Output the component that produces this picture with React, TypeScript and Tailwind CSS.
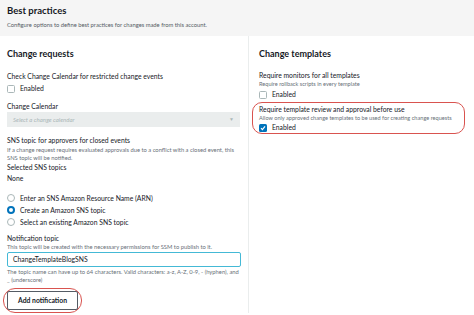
export default function App() {
  return (
    <div className="w-[474px] h-[315px] overflow-hidden bg-white text-[#16191f]" style={{ fontFamily: 'Lato, "Noto Sans", sans-serif' }}>
      <div className="bg-[#f5f5f5] h-[36px] px-[7px] pt-[4px]">
        <div className="text-[9.5px] font-bold leading-[13px]">Best practices</div>
        <div className="mt-[3px] text-[5.8px] text-[#545b64] leading-[9px]">Configure options to define best practices for changes made from this account.</div>
      </div>
      <div className="flex">
        <div className="w-[249px] px-[7px] pt-[11px] border-r border-[#eaeded]">
          <div className="text-[9px] font-bold leading-[13px]">Change requests</div>
          <div className="mt-[11px] text-[6.8px] leading-[10px]">Check Change Calendar for restricted change events</div>
          <Check label="Enabled" />
          <div className="mt-[7px] text-[6.8px] leading-[10px]">Change Calendar</div>
          <div className="mt-[1px] h-[15px] w-[233px] bg-[#eaeded] flex items-center justify-between px-[6px]">
            <span className="text-[6px] italic text-[#aab7b8]">Select a change calendar</span>
            <span className="text-[5px] text-[#aab7b8]">▼</span>
          </div>
          <div className="mt-[8px] text-[6.8px] leading-[10px]">SNS topic for approvers for closed events</div>
          <div className="mt-[1px] text-[5.8px] leading-[7.5px] text-[#687078]">If a change request requires evaluated approvals due to a conflict with a closed event, this SNS topic will be notified.</div>
          <div className="mt-[1px] text-[6.8px] leading-[10px]">Selected SNS topics</div>
          <div className="mt-[1px] text-[6.8px] leading-[10px]">None</div>
          <div className="mt-[10px] flex flex-col gap-[2px]">
            <Radio label="Enter an SNS Amazon Resource Name (ARN)" />
            <Radio label="Create an Amazon SNS topic" checked />
            <Radio label="Select an existing Amazon SNS topic" />
          </div>
          <div className="mt-[6px] text-[6.8px] leading-[10px]">Notification topic</div>
          <div className="text-[5.8px] leading-[8px] text-[#687078]">This topic will be created with the necessary permissions for SSM to publish to it.</div>
          <div className="mt-[1px] h-[15px] w-[234px] border border-[#44b9d6] rounded-[2px] flex items-center px-[5px] text-[6.8px]">ChangeTemplateBlogSNS</div>
          <div className="mt-[1px] text-[5.8px] leading-[7.5px] text-[#687078]">The topic name can have up to 64 characters. Valid characters: a-z, A-Z, 0-9, - (hyphen), and _ (underscore)</div>
          <div className="mt-[5px] ml-[-4px] w-[79px] h-[25px] rounded-[12px] border border-[#d9534f] flex items-center justify-center">
            <div className="w-[71px] h-[19px] border border-[#545b64] rounded-[2px] flex items-center justify-center text-[6.8px] font-bold">Add notification</div>
          </div>
        </div>
        <div className="flex-1 pl-[10px] pr-[8px] pt-[11px]">
          <div className="text-[9px] font-bold leading-[13px]">Change templates</div>
          <div className="mt-[10px] text-[6.8px] leading-[10px]">Require monitors for all templates</div>
          <div className="text-[5.6px] leading-[7px] text-[#687078]">Require rollback scripts in every template</div>
          <Check label="Enabled" />
          <div className="mt-[2px] ml-[-7px] w-[213px] border border-[#d9534f] rounded-[10px] px-[6px] pt-[1px]">
            <div className="text-[6.8px] leading-[10px]">Require template review and approval before use</div>
            <div className="text-[5.6px] leading-[7px] text-[#687078] whitespace-nowrap">Allow only approved change templates to be used for creating change requests</div>
            <Check label="Enabled" checked tight />
          </div>
        </div>
      </div>
    </div>
  );
}

function Check({ label, checked = false, tight = false }: { label: string; checked?: boolean; tight?: boolean }) {
  return (
    <div className={tight ? "flex items-center gap-[5px] mt-[1px] h-[11px]" : "flex items-center gap-[5px] mt-[2px] h-[11px]"}>
      {checked ? (
        <span className="w-[8px] h-[8px] rounded-[1.5px] bg-[#0073bb] flex items-center justify-center">
          <svg width="6" height="6" viewBox="0 0 6 6"><path d="M1 3.2 L2.4 4.6 L5 1.4" stroke="white" strokeWidth="1.2" fill="none" /></svg>
        </span>
      ) : (
        <span className="w-[8px] h-[8px] rounded-[1.5px] border border-[#aab7b8] bg-white" />
      )}
      <span className="text-[6.8px]">{label}</span>
    </div>
  );
}

function Radio({ label, checked = false }: { label: string; checked?: boolean }) {
  return (
    <div className="flex items-center gap-[5px] h-[10px]">
      {checked ? (
        <span className="w-[8px] h-[8px] rounded-full border-[2.5px] border-[#0073bb] bg-white" />
      ) : (
        <span className="w-[8px] h-[8px] rounded-full border border-[#aab7b8] bg-white" />
      )}
      <span className="text-[6.8px]">{label}</span>
    </div>
  );
}
